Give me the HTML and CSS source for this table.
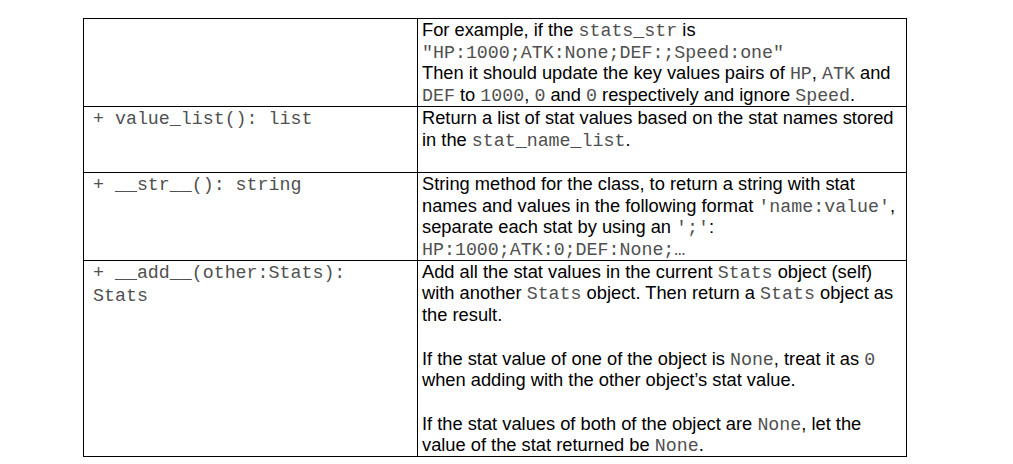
FILE: index.html
```html
<!DOCTYPE html>
<html>
<head>
<meta charset="utf-8">
<link rel="stylesheet" href="styles.css">
</head>
<body>
<table class="spec">
  <colgroup><col class="c-sig"><col class="c-desc"></colgroup>
  <tr>
    <td class="sig"></td>
    <td class="desc">
      <p>For example, if the <code>stats_str</code> is<br><code>"HP:1000;ATK:None;DEF:;Speed:one"</code><br>Then it should update the key values pairs of <code>HP</code>, <code>ATK</code> and <code>DEF</code> to <code>1000</code>, <code>0</code> and <code>0</code> respectively and ignore <code>Speed</code>.</p>
    </td>
  </tr>
  <tr>
    <td class="sig"><code>+ value_list(): list</code></td>
    <td class="desc trail">
      <p>Return a list of stat values based on the stat names stored in the <code>stat_name_list</code>.</p>
    </td>
  </tr>
  <tr>
    <td class="sig"><code>+ __str__(): string</code></td>
    <td class="desc">
      <p>String method for the class, to return a string with stat names and values in the following format <code>'name:value'</code>, separate each stat by using an <code>';'</code>:<br><code>HP:1000;ATK:0;DEF:None;…</code></p>
    </td>
  </tr>
  <tr>
    <td class="sig"><code>+ __add__(other:Stats):<br>Stats</code></td>
    <td class="desc">
      <p>Add all the stat values in the current <code>Stats</code> object (self) with another <code>Stats</code> object. Then return a <code>Stats</code> object as the result.</p>
      <p>If the stat value of one of the object is <code>None</code>, treat it as <code>0</code> when adding with the other object’s stat value.</p>
      <p>If the stat values of both of the object are <code>None</code>, let the value of the stat returned be <code>None</code>.</p>
    </td>
  </tr>
</table>
</body>
</html>
```

FILE: styles.css
```css
body {
  margin: 0;
  background: #ffffff;
  color: #000000;
  font-family: "Liberation Sans", Arial, sans-serif;
  font-size: 18.3px;
}

.spec {
  border-collapse: collapse;
  table-layout: fixed;
  width: 823px;
  margin: 18px 0 0 83px;
}

.c-sig {
  width: 334px;
}

.c-desc {
  width: 489px;
}

.spec td {
  border: 1px solid #000000;
  vertical-align: top;
  line-height: 21.7px;
}

.sig {
  padding: 0 8px 0 9px;
}

.sig code {
  line-height: 21.7px;
}

.desc {
  padding: 0 4px 0 4px;
}

.desc p {
  margin: 0;
}

.desc p + p {
  margin-top: 21.7px;
}

.trail {
  padding-bottom: 21.7px;
}

code {
  font-family: "Liberation Mono", "Courier New", monospace;
  font-size: 18.3px;
  line-height: 1;
  color: #505050;
}
```
